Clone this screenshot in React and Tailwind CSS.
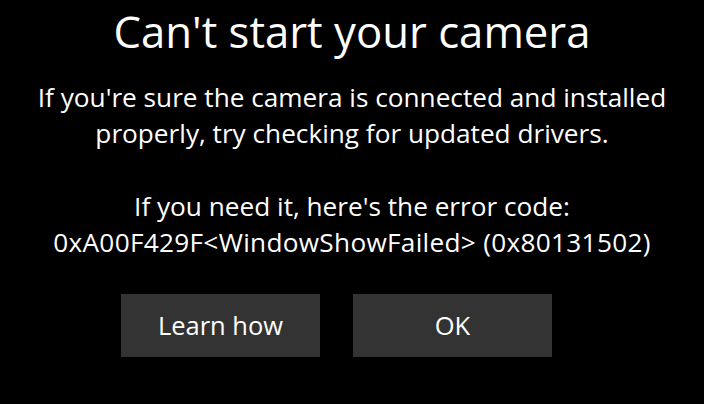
export default function App() {
    return (
        <div
            className="w-[704px] h-[404px] bg-black text-white flex flex-col items-center overflow-hidden"
            style={{ fontFamily: '"Open Sans", "Noto Sans", sans-serif' }}
        >
            <h1 className="text-[43.7px] leading-[62px] font-normal text-center">
                Can't start your camera
            </h1>

            <p className="mt-[17px] text-[26.2px] leading-[36px] text-center">
                If you're sure the camera is connected and installed
                <br />
                properly, try checking for updated drivers.
            </p>

            <p className="mt-[37px] text-[26.2px] leading-[36px] text-center">
                If you need it, here's the error code:
                <br />
                <span className="tracking-[0.3px]">0xA00F429F&lt;WindowShowFailed&gt; (0x80131502)</span>
            </p>

            <div className="mt-[34px] w-full flex gap-[33px] pl-[121px]">
                <button className="w-[199px] h-[63px] bg-[#333333] text-white text-[25.5px]">
                    Learn how
                </button>
                <button className="w-[199px] h-[63px] bg-[#333333] text-white text-[25.5px]">
                    OK
                </button>
            </div>
        </div>
    );
}
